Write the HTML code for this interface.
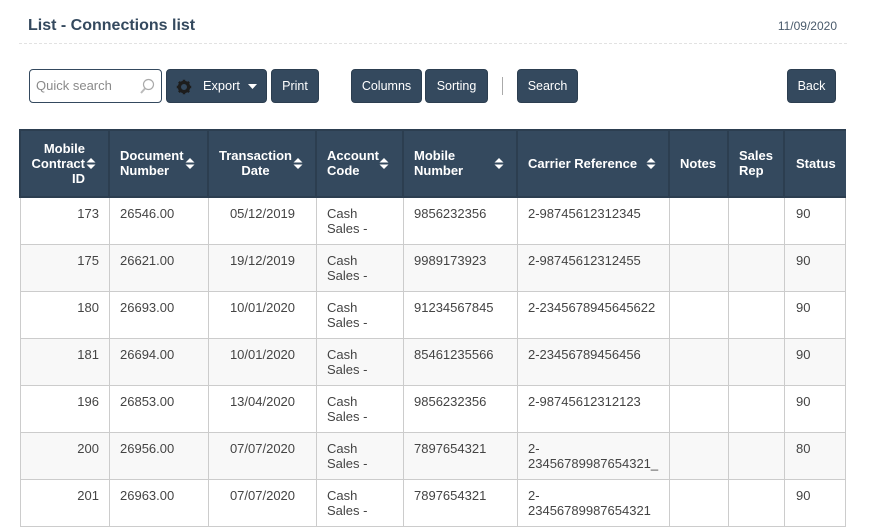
<!DOCTYPE html>
<html>
<head>
<meta charset="utf-8">
<style>
html,body{margin:0;padding:0;background:#fff;}
body{width:869px;height:527px;overflow:hidden;position:relative;font-family:"Liberation Sans",sans-serif;}
.a{position:absolute;white-space:nowrap;}
.btn{position:absolute;top:69px;height:34px;box-sizing:border-box;background:#34495e;border:1px solid #2c3e50;border-radius:4px;color:#fff;font-size:12.5px;line-height:32px;text-align:center;}
.h{position:absolute;background:#34495e;}
.hl{position:absolute;background:#2c3e50;}
.hd{position:absolute;color:#fff;font-weight:bold;font-size:13px;line-height:15px;white-space:nowrap;}
.s{position:absolute;width:10px;height:11px;}
.g{position:absolute;background:#ccc;}
.t{position:absolute;color:#444;font-size:13px;line-height:15px;white-space:nowrap;}
.r{text-align:right;}
.c{text-align:center;}
</style>
</head>
<body>
<div class="a" style="left:28px;top:16px;font-size:16px;font-weight:bold;color:#34495e;line-height:19px;">List - Connections list</div>
<div class="a" style="right:32px;top:19px;font-size:12px;color:#4a5b6c;line-height:14px;">11/09/2020</div>
<div class="a" style="left:19px;top:43px;width:828px;border-top:1px dashed #e2e2e2;"></div>

<div class="a" style="left:29px;top:69px;width:133px;height:34px;box-sizing:border-box;border:1px solid #34495e;border-radius:4px;background:#fff;"></div>
<div class="a" style="left:36px;top:78px;font-size:13px;line-height:16px;color:#8a8a8a;">Quick search</div>
<svg class="a" style="left:139px;top:77px;" width="17" height="18" viewBox="0 0 17 18"><circle cx="9.5" cy="7.5" r="5" fill="none" stroke="#aaa" stroke-width="1.2"/><path d="M6 11.5L2 16" stroke="#bbb" stroke-width="2" fill="none"/></svg>

<div class="btn" style="left:166px;width:101px;"></div>
<svg class="a" style="left:176px;top:79px;" width="16" height="16" viewBox="0 0 16 16"><circle cx="8" cy="8" r="4.6" fill="none" stroke="#1d1d1d" stroke-width="3.2"/><g stroke="#1d1d1d" stroke-width="2.4"><path d="M8 .8V3.5M8 12.5V15.2M.8 8H3.5M12.5 8H15.2M2.9 2.9L4.8 4.8M11.2 11.2L13.1 13.1M2.9 13.1L4.8 11.2M11.2 4.8L13.1 2.9"/></g></svg>
<div class="a" style="left:203px;top:78px;font-size:12.8px;line-height:16px;color:#fff;">Export</div>
<svg class="a" style="left:248px;top:84px;" width="9" height="5" viewBox="0 0 9 5"><path d="M0 0H9L4.5 5Z" fill="#fff"/></svg>
<div class="btn" style="left:271px;width:48px;">Print</div>
<div class="btn" style="left:351px;width:71px;">Columns</div>
<div class="btn" style="left:425px;width:63px;">Sorting</div>
<div class="a" style="left:502px;top:77px;width:1px;height:18px;background:#aaa;"></div>
<div class="btn" style="left:517px;width:61px;">Search</div>
<div class="btn" style="left:787px;width:49px;">Back</div>

<!-- header -->
<div class="h" style="left:19px;top:129px;width:827px;height:69px;"></div>
<div class="hl" style="left:19px;top:129px;width:827px;height:2px;"></div>
<div class="hl" style="left:19px;top:196px;width:827px;height:2px;"></div>
<div class="hl" style="left:19px;top:129px;width:2px;height:69px;"></div>
<div class="hl" style="left:108px;top:129px;width:2px;height:69px;"></div>
<div class="hl" style="left:207px;top:129px;width:2px;height:69px;"></div>
<div class="hl" style="left:315px;top:129px;width:2px;height:69px;"></div>
<div class="hl" style="left:402px;top:129px;width:2px;height:69px;"></div>
<div class="hl" style="left:516px;top:129px;width:2px;height:69px;"></div>
<div class="hl" style="left:668px;top:129px;width:2px;height:69px;"></div>
<div class="hl" style="left:727px;top:129px;width:2px;height:69px;"></div>
<div class="hl" style="left:783px;top:129px;width:2px;height:69px;"></div>

<div class="hd r" style="left:21px;width:64px;top:141px;">Mobile<br>Contract<br>ID</div>
<div class="hd" style="left:120px;top:148px;">Document<br>Number</div>
<div class="hd c" style="left:219px;top:148px;">Transaction<br>Date</div>
<div class="hd" style="left:327px;top:148px;">Account<br>Code</div>
<div class="hd" style="left:414px;top:148px;">Mobile<br>Number</div>
<div class="hd" style="left:528px;top:156px;">Carrier Reference</div>
<div class="hd" style="left:680px;top:156px;">Notes</div>
<div class="hd" style="left:739px;top:148px;">Sales<br>Rep</div>
<div class="hd" style="left:796px;top:156px;">Status</div>

<svg class="s" style="left:86px;top:158px;" viewBox="0 0 10 11"><path d="M.5 4.5L5 0 9.5 4.5ZM.5 6.5L5 11 9.5 6.5Z" fill="#fff"/></svg>
<svg class="s" style="left:185px;top:158px;" viewBox="0 0 10 11"><path d="M.5 4.5L5 0 9.5 4.5ZM.5 6.5L5 11 9.5 6.5Z" fill="#fff"/></svg>
<svg class="s" style="left:293px;top:158px;" viewBox="0 0 10 11"><path d="M.5 4.5L5 0 9.5 4.5ZM.5 6.5L5 11 9.5 6.5Z" fill="#fff"/></svg>
<svg class="s" style="left:379px;top:158px;" viewBox="0 0 10 11"><path d="M.5 4.5L5 0 9.5 4.5ZM.5 6.5L5 11 9.5 6.5Z" fill="#fff"/></svg>
<svg class="s" style="left:494px;top:158px;" viewBox="0 0 10 11"><path d="M.5 4.5L5 0 9.5 4.5ZM.5 6.5L5 11 9.5 6.5Z" fill="#fff"/></svg>
<svg class="s" style="left:646px;top:158px;" viewBox="0 0 10 11"><path d="M.5 4.5L5 0 9.5 4.5ZM.5 6.5L5 11 9.5 6.5Z" fill="#fff"/></svg>

<!-- striped rows -->
<div class="a" style="left:20px;top:245px;width:825px;height:46px;background:#f8f8f8;"></div>
<div class="a" style="left:20px;top:339px;width:825px;height:46px;background:#f8f8f8;"></div>
<div class="a" style="left:20px;top:433px;width:825px;height:46px;background:#f8f8f8;"></div>

<!-- grid -->
<div class="g" style="left:20px;top:244px;width:826px;height:1px;"></div>
<div class="g" style="left:20px;top:291px;width:826px;height:1px;"></div>
<div class="g" style="left:20px;top:338px;width:826px;height:1px;"></div>
<div class="g" style="left:20px;top:385px;width:826px;height:1px;"></div>
<div class="g" style="left:20px;top:432px;width:826px;height:1px;"></div>
<div class="g" style="left:20px;top:479px;width:826px;height:1px;"></div>
<div class="g" style="left:20px;top:526px;width:826px;height:1px;"></div>
<div class="g" style="left:20px;top:198px;width:1px;height:329px;"></div>
<div class="g" style="left:109px;top:198px;width:1px;height:329px;"></div>
<div class="g" style="left:208px;top:198px;width:1px;height:329px;"></div>
<div class="g" style="left:316px;top:198px;width:1px;height:329px;"></div>
<div class="g" style="left:403px;top:198px;width:1px;height:329px;"></div>
<div class="g" style="left:517px;top:198px;width:1px;height:329px;"></div>
<div class="g" style="left:669px;top:198px;width:1px;height:329px;"></div>
<div class="g" style="left:728px;top:198px;width:1px;height:329px;"></div>
<div class="g" style="left:784px;top:198px;width:1px;height:329px;"></div>
<div class="g" style="left:845px;top:198px;width:1px;height:329px;"></div>

<!-- row 1 -->
<div class="t r" style="left:21px;width:78px;top:206px;">173</div>
<div class="t" style="left:120px;top:206px;">26546.00</div>
<div class="t c" style="left:209px;width:107px;top:206px;">05/12/2019</div>
<div class="t" style="left:327px;top:206px;">Cash<br>Sales -</div>
<div class="t" style="left:414px;top:206px;">9856232356</div>
<div class="t" style="left:528px;top:206px;">2-98745612312345</div>
<div class="t" style="left:796px;top:206px;">90</div>
<!-- row 2 -->
<div class="t r" style="left:21px;width:78px;top:253px;">175</div>
<div class="t" style="left:120px;top:253px;">26621.00</div>
<div class="t c" style="left:209px;width:107px;top:253px;">19/12/2019</div>
<div class="t" style="left:327px;top:253px;">Cash<br>Sales -</div>
<div class="t" style="left:414px;top:253px;">9989173923</div>
<div class="t" style="left:528px;top:253px;">2-98745612312455</div>
<div class="t" style="left:796px;top:253px;">90</div>
<!-- row 3 -->
<div class="t r" style="left:21px;width:78px;top:300px;">180</div>
<div class="t" style="left:120px;top:300px;">26693.00</div>
<div class="t c" style="left:209px;width:107px;top:300px;">10/01/2020</div>
<div class="t" style="left:327px;top:300px;">Cash<br>Sales -</div>
<div class="t" style="left:414px;top:300px;">91234567845</div>
<div class="t" style="left:528px;top:300px;">2-2345678945645622</div>
<div class="t" style="left:796px;top:300px;">90</div>
<!-- row 4 -->
<div class="t r" style="left:21px;width:78px;top:347px;">181</div>
<div class="t" style="left:120px;top:347px;">26694.00</div>
<div class="t c" style="left:209px;width:107px;top:347px;">10/01/2020</div>
<div class="t" style="left:327px;top:347px;">Cash<br>Sales -</div>
<div class="t" style="left:414px;top:347px;">85461235566</div>
<div class="t" style="left:528px;top:347px;">2-23456789456456</div>
<div class="t" style="left:796px;top:347px;">90</div>
<!-- row 5 -->
<div class="t r" style="left:21px;width:78px;top:394px;">196</div>
<div class="t" style="left:120px;top:394px;">26853.00</div>
<div class="t c" style="left:209px;width:107px;top:394px;">13/04/2020</div>
<div class="t" style="left:327px;top:394px;">Cash<br>Sales -</div>
<div class="t" style="left:414px;top:394px;">9856232356</div>
<div class="t" style="left:528px;top:394px;">2-98745612312123</div>
<div class="t" style="left:796px;top:394px;">90</div>
<!-- row 6 -->
<div class="t r" style="left:21px;width:78px;top:441px;">200</div>
<div class="t" style="left:120px;top:441px;">26956.00</div>
<div class="t c" style="left:209px;width:107px;top:441px;">07/07/2020</div>
<div class="t" style="left:327px;top:441px;">Cash<br>Sales -</div>
<div class="t" style="left:414px;top:441px;">7897654321</div>
<div class="t" style="left:528px;top:441px;">2-<br>23456789987654321_</div>
<div class="t" style="left:796px;top:441px;">80</div>
<!-- row 7 -->
<div class="t r" style="left:21px;width:78px;top:488px;">201</div>
<div class="t" style="left:120px;top:488px;">26963.00</div>
<div class="t c" style="left:209px;width:107px;top:488px;">07/07/2020</div>
<div class="t" style="left:327px;top:488px;">Cash<br>Sales -</div>
<div class="t" style="left:414px;top:488px;">7897654321</div>
<div class="t" style="left:528px;top:488px;">2-<br>23456789987654321</div>
<div class="t" style="left:796px;top:488px;">90</div>
</body>
</html>
